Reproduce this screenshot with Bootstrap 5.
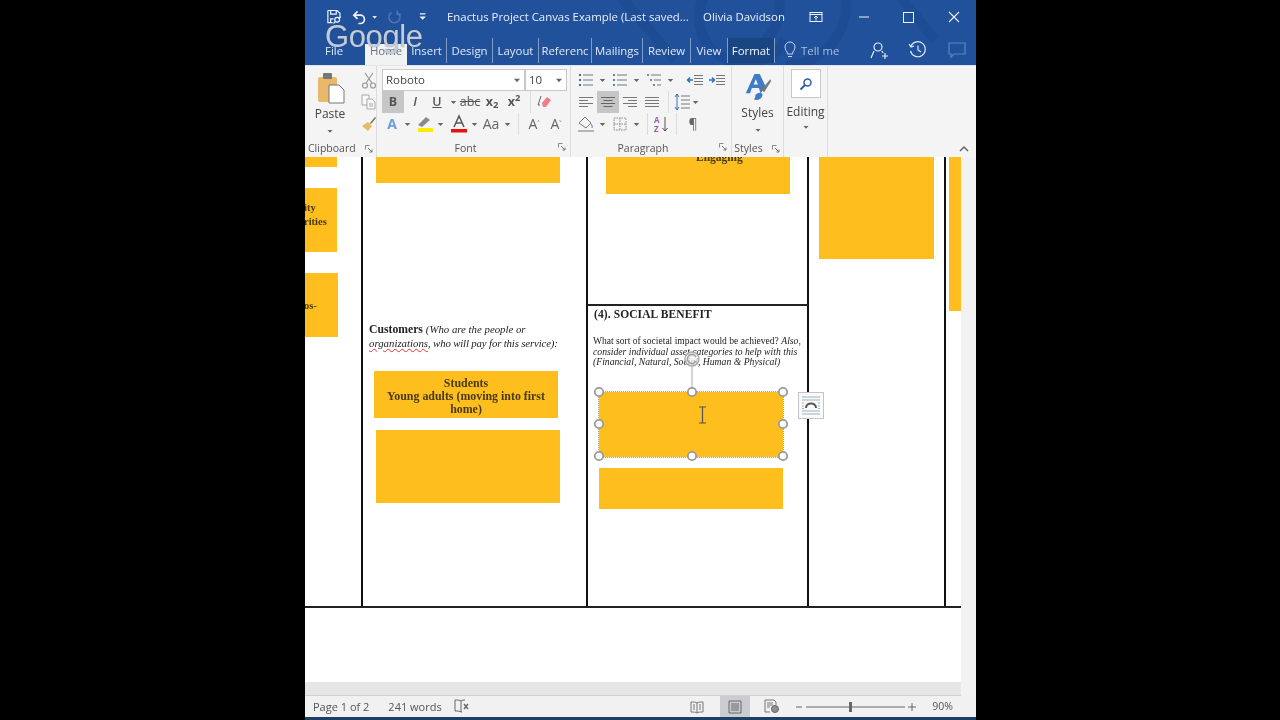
<!DOCTYPE html>
<html lang="en"><head><meta charset="utf-8"><title>Word</title>
<link href="https://cdn.jsdelivr.net/npm/bootstrap@5.3.0/dist/css/bootstrap.min.css" rel="stylesheet">
<style>
html,body{height:100%;margin:0;background:#000;overflow:hidden}
body{font-family:"Open Sans","Noto Sans",sans-serif;font-size:12px;color:#444}
.wnd{width:671px;height:720px;margin-left:305px;background:#fff;position:relative;overflow:hidden;filter:blur(.3px)}
.tbar{height:65px;background:#21519b;color:#e8eef8;position:relative;overflow:hidden}
.tpat{position:absolute;left:0;top:0}
.trow1{height:33px;padding-left:21px;position:relative}
.trow2{height:32px;padding-left:5px;position:relative}
.ttl{font-size:11.4px;margin-left:20px;width:256px;white-space:nowrap;flex:none}
.usr{width:100px;white-space:nowrap;font-size:11.4px;flex:none}
.cap{width:26px;flex:none}.cap2{width:45px;flex:none}.capg{margin-left:12px}
.tb{height:25px;padding:0;border-right:1px solid #7f9cc9;margin-top:5px;white-space:nowrap;overflow:hidden;line-height:25px;font-size:11.4px;color:#dfe8f5;text-align:center;flex:none}
.tb0{width:55px;border:0;padding-left:15px;text-align:left}
.tbh{width:42px;height:21px;margin-top:11px;line-height:13px;background:#f0f2f4;color:#6a7480;border:0}
.tb1{width:40px}.tb2{width:46px}.tb3{width:46px}.tb4{width:53px}.tb5{width:51px}.tb6{width:48px}.tb7{width:36px}
.tbf{width:48px;background:#1a4583;color:#f2f5fa;border-left:1px solid #7f9cc9}
.tlm{width:72px;border:0;color:#a9bedd;text-align:left;padding-left:4px}
.tic{margin-left:19px;margin-top:8px}
.gwm{position:absolute;left:20px;top:18px;font-size:31px;line-height:38px;color:rgba(255,255,255,.72);text-shadow:0 0 1px #28466f;letter-spacing:-.4px;font-family:"Liberation Sans",sans-serif}
.rib{height:92px;background:#f4f4f4;position:relative;border-top:1px solid #e0e6f0}
.grp{height:91px;border-right:1px solid #dcdcdc;position:relative;padding-top:3px}
.g1{width:72px;padding-left:5px}.g2{width:194px;padding-left:5px}.g3{width:161px;padding-left:4px}.g4{width:52px;padding-top:6px}.g5{width:44px}
.lbl{position:absolute;left:0;right:0;bottom:1px;height:16px;line-height:16px;text-align:center;font-size:10.5px;color:#555;white-space:nowrap}
.lblc{padding-right:16px}
.lbll{text-align:left;padding-left:3px}
.lnch{position:absolute;right:3px;bottom:4px}
.frow{height:22px}
.bx{width:22px;height:22px;flex:none}
.bxn{width:20px}.cr{width:11px;height:22px;flex:none}.gp{width:3px;flex:none}.gp1{width:1px;flex:none}.m2{margin-left:2px}
.vs{width:1px;height:22px;background:#dcdcdc;flex:none;margin:0 5px}
.vsn{margin-right:3px}
.on{background:#c6c6c6}
.fbox{height:22px;background:#fff;border:1px solid #c8c8c8;font-size:11.5px;line-height:20px;padding-left:3px;color:#444;position:relative}
.fn{width:143px}.fs{width:42px}
.big{font-size:12px;line-height:14px;color:#444;text-align:center}
.edb{width:30px;height:29px;background:#fff;border:1px solid #c8c8c8}
.chev{position:absolute;right:6px;bottom:4px}
.dmain{height:539px}
.pgw{width:656px;height:539px}
.pg{height:525px;position:relative;overflow:hidden;background:#fff}
.strip{height:14px;background:#e6e6e6;border-bottom:1px solid #d0d0d0}
.scr{width:15px;background:#f2f2f2}
.shp{position:absolute;background:#fdbe1e}
.vl{position:absolute;top:0;width:2px;height:450px;background:#111}
.hl{position:absolute;height:2px;background:#222}
.dt{position:absolute;font-family:"Liberation Serif",serif;color:#222;white-space:nowrap}
.s1{left:0;top:0;width:32px;height:10px}
.s2{left:0;top:31px;width:32px;height:64px}
.s3{left:0;top:116px;width:33px;height:64px}
.s4{left:71px;top:0;width:184px;height:26px}
.s5{left:301px;top:0;width:184px;height:37px;overflow:hidden}
.s6{left:514px;top:0;width:115px;height:102px}
.s7{left:644px;top:0;width:12px;height:154px}
.s8{left:69px;top:214px;width:184px;height:47px;text-align:center;font:bold 11.9px/13.2px "Liberation Serif",serif;color:#4a3a12;padding-top:6px}
.s9{left:71px;top:273px;width:184px;height:73px}
.s10{left:294px;top:235px;width:184px;height:65px;outline:1px dotted #b5a26a}
.s11{left:294px;top:311px;width:184px;height:41px}
.cutt{font:bold 10.5px/14px "Liberation Serif",serif;color:#4a3a12;position:absolute;left:-1px;white-space:nowrap}
.cust{left:64px;top:166px;font-size:11.7px;line-height:13.5px}
.cust i{font-size:10.8px;color:#222}
.tght{letter-spacing:-.15px}
.wavy{text-decoration:underline wavy #d33 1px}
.soc{left:289px;top:149px;font-weight:bold;font-size:11.5px;letter-spacing:.1px}
.socp{left:288px;top:179px;font-size:9.55px;line-height:10.7px}
.socp i{font-size:9.7px}
.hand{position:absolute;left:0;top:0}
.lay{position:absolute;left:493px;top:235px;width:26px;height:27px;background:#fafafa;border:1px solid #c4c4c4}
.sts{height:21px;background:#f1f1f1;font-size:11px;color:#555;line-height:21px;padding:0 23px 0 8px}
.wc{margin-left:19px;width:66px}
.rv{width:30px;height:21px;flex:none}
.rvon{background:#c9cdd1;margin-left:8px}
.rvw{margin-left:7px}
.zm{font-size:10.5px;width:33px;text-align:right;flex:none}
.sld{width:130px;height:21px;margin-left:3px;flex:none}
.end{height:3px;background:#1d3f66}
.vl1{left:56px}.vl2{left:281px}.vl3{left:502px}.vl4{left:639px}
.hl1{left:0;top:449px;width:656px}.hl2{left:282px;top:147px;width:221px}
.c1{top:13px}.c2{top:26px}.c3{left:90px;top:-7px;font-size:11.5px}
.fnt{font-size:12.5px;line-height:22px;color:#555}.fnt2{font-size:14px;line-height:22px;color:#666}
.afx{color:#6f9bd6;font-weight:700}
.tiny{font-size:8px;vertical-align:top}
.styt{margin-top:4px}.edt{margin-top:7px}
</style></head><body>
<svg width="0" height="0" class="position-absolute">
<defs>
<symbol id="c" viewBox="0 0 10 10"><path d="M2.5 4h5L5 6.8z" fill="#666"/></symbol>
<symbol id="cw" viewBox="0 0 10 10"><path d="M2.5 4h5L5 6.8z" fill="#dfe8f5"/></symbol>
<symbol id="ls" viewBox="0 0 10 10"><path d="M1.5 1.5h4M1.5 1.5v4" stroke="#888" fill="none"/><path d="M4 4l4 4M8 5.5V8H5.5" stroke="#777" fill="none"/></symbol>
<symbol id="al" viewBox="0 0 16 12"><path d="M1 1.5h14M1 4.5h9M1 7.5h14M1 10.5h9" stroke="#777" fill="none"/></symbol>
<symbol id="ac" viewBox="0 0 16 12"><path d="M1 1.5h14M3.5 4.5h9M1 7.5h14M3.5 10.5h9" stroke="#666" fill="none"/></symbol>
<symbol id="ar" viewBox="0 0 16 12"><path d="M1 1.5h14M6 4.5h9M1 7.5h14M6 10.5h9" stroke="#777" fill="none"/></symbol>
<symbol id="aj" viewBox="0 0 16 12"><path d="M1 1.5h14M1 4.5h14M1 7.5h14M1 10.5h14" stroke="#777" fill="none"/></symbol>
</defs></svg>
<div class="wnd">
 <header class="tbar">
  <svg class="tpat" width="671" height="65" viewBox="0 0 671 65" fill="none" stroke="#173f80" stroke-opacity=".25" stroke-width="10"><path d="M310 -10l60 70M400 -5a45 45 0 0 0 80 45M470 -10a40 40 0 0 1 -10 50M540 -5a60 60 0 0 1 -60 70M590 -10l40 50"/></svg>
  <div class="trow1 d-flex align-items-center">
   <svg width="18" height="18" viewBox="0 0 18 18" fill="none" stroke="#eef3fb" stroke-width="1.3"><path d="M2 2h10l3 3v4M2 2v13h5"/><path d="M5 2v4h6V2M5 15v-4h3"/><circle cx="12" cy="12" r="2.6"/><path d="M8 16l2-2M14 10l2-1"/></svg>
   <svg class="ms-2" width="18" height="18" viewBox="0 0 18 18" fill="none" stroke="#eef3fb" stroke-width="1.8"><path d="M7 3L3 7l4 4M3 7h7a4.500 4.500 0 0 1 0 9H8"/></svg>
   <svg class="m2" width="10" height="10"><use href="#cw"/></svg>
   <svg class="ms-2" width="16" height="16" viewBox="0 0 16 16" fill="none" stroke="#4d76b4" stroke-width="1.6"><path d="M11 3a6 6 0 1 1-6 0M11 1v4H15"/></svg>
   <svg class="ms-3" width="10" height="12" viewBox="0 0 10 12" fill="#eef3fb"><path d="M2 2h6v1.200H2zM1.500 5.500h7L5 9z"/></svg>
   <div class="ttl">Enactus Project Canvas Example (Last saved...</div>
   <div class="usr">Olivia Davidson</div>
   <div class="cap text-center"><svg width="14" height="12" viewBox="0 0 14 12" fill="none" stroke="#eef3fb"><rect x="1" y="1.500" width="12" height="9"/><path d="M1 3.500h12M7 9.500V5M5 7l2-2 2 2"/></svg></div>
   <div class="cap2 capg text-center"><svg width="12" height="12" viewBox="0 0 12 12"><path d="M1 6h10" stroke="#eef3fb"/></svg></div>
   <div class="cap2 text-center"><svg width="11" height="11" viewBox="0 0 11 11" fill="none" stroke="#eef3fb"><rect x=".5" y=".5" width="10" height="10"/></svg></div>
   <div class="cap2 text-center"><svg width="12" height="12" viewBox="0 0 12 12" stroke="#eef3fb" stroke-width="1.100"><path d="M1 1l10 10M11 1L1 11"/></svg></div>
  </div>
  <nav class="trow2 d-flex">
   <div class="tb tb0">File</div><div class="tb tbh">Home</div><div class="tb tb1">Insert</div>
   <div class="tb tb2">Design</div><div class="tb tb3">Layout</div><div class="tb tb4">Referenc</div><div class="tb tb5">Mailings</div><div class="tb tb6">Review</div><div class="tb tb7 border-0">View</div><div class="tb tbf">Format</div>
   <svg class="ms-2 mt-2" width="14" height="18" viewBox="0 0 14 18" fill="none" stroke="#c9d7ec"><path d="M4.500 13c0-3-2.500-3.500-2.500-7a5 5 0 0 1 10 0c0 3.500-2.500 4-2.500 7zM5 15.500h4"/></svg>
   <div class="tb tlm">Tell me</div>
   <svg class="mt-2" width="20" height="18" viewBox="0 0 20 18" fill="none" stroke="#e6edf8" stroke-width="1.200"><circle cx="9" cy="6" r="4"/><path d="M2 17l3-7M13 10l1 2M13 15h6M16 12v6"/></svg>
   <svg class="tic" width="20" height="18" viewBox="0 0 20 18" fill="none" stroke="#dfe8f5" stroke-width="1.200"><path d="M3 5a7.500 7.500 0 1 1-.5 5M1 3l2 3 3-1M10 4.500V9l3 2"/></svg>
   <svg class="tic" width="20" height="18" viewBox="0 0 20 18" fill="none" stroke="#5c86bf" stroke-width="1.200"><path d="M2 2h16v11H7l-3 3v-3H2z"/></svg>
  </nav>
  <div class="gwm">Google</div>
 </header>
 <section class="rib d-flex">
  <div class="grp g1 d-flex">
   <div class="big">
    <svg class="d-block mx-auto" width="40" height="38" viewBox="0 0 40 38"><rect x="8" y="8" width="19" height="25" rx="2" fill="#e8b96a"/><rect x="13" y="4" width="9" height="6" rx="1" fill="#777"/><path d="M19 16h10l5 5v13H19z" fill="#fff" stroke="#777"/></svg>
    <div>Paste</div><svg width="10" height="10" class="mt-1"><use href="#c"/></svg>
   </div>
   <div class="ms-2">
    <div class="bx d-flex align-items-center justify-content-center"><svg width="16" height="17" viewBox="0 0 16 17" fill="none" stroke="#999" stroke-width="1.200"><circle cx="4" cy="13.500" r="2.500"/><circle cx="12" cy="13.500" r="2.500"/><path d="M5 11L12 1M11 11L4 1"/></svg></div>
    <div class="bx d-flex align-items-center justify-content-center"><svg width="16" height="16" viewBox="0 0 16 16" fill="#f7f7f7" stroke="#aaa"><path d="M1 1h7v10H1z"/><path d="M6 5h5l3 3v7H6z"/><path d="M8 10h4M8 12h4"/></svg></div>
    <div class="bx d-flex align-items-center justify-content-center"><svg width="16" height="16" viewBox="0 0 16 16"><path d="M9 7l5-6 1 1-5 6z" fill="#7a6a50"/><path d="M1 10l6-4 4 4-4 5z" fill="#e8b96a"/></svg></div>
   </div>
   <div class="lbl lbll">Clipboard<svg class="ms-2" width="10" height="10"><use href="#ls"/></svg></div>
  </div>
  <div class="grp g2">
   <div class="d-flex"><div class="fbox fn">Roboto<svg class="position-absolute top-0 end-0 mt-1" width="14" height="12"><use href="#c"/></svg></div><div class="fbox fs">10<svg class="position-absolute top-0 end-0 mt-1" width="14" height="12"><use href="#c"/></svg></div></div>
   <div class="frow d-flex align-items-center">
    <div class="bx on d-flex align-items-center justify-content-center"><b class="fnt">B</b></div>
    <div class="bx text-center"><i class="fw-semibold fnt">I</i></div>
    <div class="bx text-center"><u class="fw-semibold fnt">U</u></div>
    <svg class="cr" viewBox="0 0 11 22"><use href="#c" width="11" height="22"/></svg>
    <div class="bx text-center"><s class="fnt">abc</s></div>
    <div class="bx text-center fw-bold fnt">x<sub>2</sub></div>
    <div class="bx text-center fw-bold fnt">x<sup>2</sup></div>
    <div class="vs vsn"></div>
    <svg width="18" height="18" viewBox="0 0 18 18"><path d="M7 3L4 12h2" fill="none" stroke="#666"/><path d="M8 10l5-6 4 3-5 7H9z" fill="#ef7d8c"/></svg>
   </div>
   <div class="frow d-flex align-items-center">
    <div class="bx bxn text-center fnt2 afx">A</div>
    <svg class="cr" viewBox="0 0 11 22"><use href="#c" width="11" height="22"/></svg>
    <svg class="m2" width="20" height="18" viewBox="0 0 20 18"><path d="M3 10l8-8 4 3-8 7z" fill="#8a8a8a"/><rect x="3" y="13" width="15" height="4" fill="#ffeb00"/></svg>
    <svg class="cr" viewBox="0 0 11 22"><use href="#c" width="11" height="22"/></svg>
    <div class="gp"></div>
    <svg width="20" height="20" viewBox="0 0 20 20"><path d="M5 13L10 2l5 11M7 9h6" fill="none" stroke="#555" stroke-width="1.500"/><rect x="2" y="15" width="16" height="3.500" fill="#e81010"/></svg>
    <svg class="cr" viewBox="0 0 11 22"><use href="#c" width="11" height="22"/></svg>
    <div class="bx text-center fnt2">Aa</div>
    <svg class="cr" viewBox="0 0 11 22"><use href="#c" width="11" height="22"/></svg>
    <div class="vs"></div>
    <div class="bx bxn text-center fnt2">A<small class="tiny">˄</small></div><div class="bx bxn text-center fnt2 m2">A<small class="tiny">˅</small></div>
   </div>
   <div class="lbl lblc">Font<svg class="lnch" width="10" height="10"><use href="#ls"/></svg></div>
  </div>
  <div class="grp g3">
   <div class="frow d-flex align-items-center">
    <div class="bx d-flex align-items-center justify-content-center"><svg width="16" height="14" viewBox="0 0 16 14"><path d="M5 2h10M5 7h10M5 12h10" stroke="#777"/><path d="M1 1h2v2H1zM1 6h2v2H1zM1 11h2v2H1z" fill="#3d6fb5"/></svg></div>
    <svg class="cr" viewBox="0 0 11 22"><use href="#c" width="11" height="22"/></svg>
    <div class="gp1"></div>
    <div class="bx d-flex align-items-center justify-content-center"><svg width="16" height="14" viewBox="0 0 16 14"><path d="M5 2h10M5 7h10M5 12h10" stroke="#777"/><path d="M1 1h2v2H1zM1 6h2v2H1zM1 11h2v2H1z" fill="#5a83c0"/></svg></div>
    <svg class="cr" viewBox="0 0 11 22"><use href="#c" width="11" height="22"/></svg>
    <div class="gp1"></div>
    <div class="bx d-flex align-items-center justify-content-center"><svg width="16" height="14" viewBox="0 0 16 14"><path d="M5 2h10M8 7h7M11 12h4" stroke="#777"/><path d="M1 1h2v2H1zM4 6h2v2H4zM7 11h2v2H7z" fill="#6a8ac0"/></svg></div>
    <svg class="cr" viewBox="0 0 11 22"><use href="#c" width="11" height="22"/></svg>
    <div class="bx ms-2 d-flex align-items-center justify-content-center"><svg width="18" height="13" viewBox="0 0 18 13"><path d="M8 1.500h9M8 4.500h9M8 7.500h9M8 10.500h9" stroke="#777"/><path d="M7 6H2M4 3.500L1.500 6 4 8.500" stroke="#2e6fc2" stroke-width="1.500" fill="none"/></svg></div>
    <div class="bx d-flex align-items-center justify-content-center"><svg width="18" height="13" viewBox="0 0 18 13"><path d="M8 1.500h9M8 4.500h9M8 7.500h9M8 10.500h9" stroke="#777"/><path d="M1 6h5M4 3.500L6.500 6 4 8.500" stroke="#2e6fc2" stroke-width="1.500" fill="none"/></svg></div>
   </div>
   <div class="frow d-flex align-items-center">
    <div class="bx d-flex align-items-center justify-content-center"><svg width="16" height="12"><use href="#al"/></svg></div>
    <div class="bx on d-flex align-items-center justify-content-center"><svg width="16" height="12"><use href="#ac"/></svg></div>
    <div class="bx d-flex align-items-center justify-content-center"><svg width="16" height="12"><use href="#ar"/></svg></div>
    <div class="bx d-flex align-items-center justify-content-center"><svg width="16" height="12"><use href="#aj"/></svg></div>
    <div class="vs"></div>
    <svg width="16" height="18" viewBox="0 0 16 18"><path d="M7 3h9M7 7h9M7 11h9M7 15h9" stroke="#777"/><path d="M3 1v16M1 4l2-3 2 3M1 14l2 3 2-3" stroke="#3d6fb5" fill="none"/></svg>
    <svg class="cr" viewBox="0 0 11 22"><use href="#c" width="11" height="22"/></svg>
   </div>
   <div class="frow d-flex align-items-center">
    <div class="bx d-flex align-items-center justify-content-center"><svg width="18" height="18" viewBox="0 0 18 18" fill="none" stroke="#777"><path d="M2 8l6-6 6 6-5 5z"/><path d="M1 16h16"/><path d="M13 8c3 2 2 5 2 5" stroke="#3d6fb5"/></svg></div>
    <svg class="cr" viewBox="0 0 11 22"><use href="#c" width="11" height="22"/></svg>
    <div class="gp1"></div>
    <div class="bx d-flex align-items-center justify-content-center"><svg width="14" height="14" viewBox="0 0 14 14" fill="none" stroke="#888" stroke-dasharray="1.500 1"><path d="M1 1h12v12H1zM7 1v12M1 7h12"/></svg></div>
    <svg class="cr" viewBox="0 0 11 22"><use href="#c" width="11" height="22"/></svg>
    <div class="vs"></div>
    <svg width="18" height="18" viewBox="0 0 18 18"><text x="1" y="8" font-size="8" fill="#9a5db0" font-weight="700">A</text><text x="1" y="17" font-size="8" fill="#9a5db0" font-weight="700">Z</text><path d="M12 2v14M9.500 13l2.500 3 2.500-3" stroke="#555" fill="none"/></svg>
    <div class="vs"></div>
    <div class="bx text-center fnt2">¶</div>
   </div>
   <div class="lbl lblc">Paragraph<svg class="lnch" width="10" height="10"><use href="#ls"/></svg></div>
  </div>
  <div class="grp g4 big">
   <svg class="d-block mx-auto" width="28" height="30" viewBox="0 0 32 34"><path d="M2 24L12 2h6l7 15-6 7-2-6H9l-2 6z" fill="#3f7cc4"/><path d="M11 14h5l-2.500-6z" fill="#f4f4f4"/><path d="M20 20l10-12 1 2-8 13z" fill="#777"/><path d="M13 26c4-4 9-3 8 1s-6 6-10 4c2-1 2-3 2-5z" fill="#3f7cc4"/></svg>
   <div class="styt">Styles</div><svg width="10" height="10" class="mt-1"><use href="#c"/></svg>
   <div class="lbl">Styles<svg class="ms-2" width="10" height="10"><use href="#ls"/></svg></div>
  </div>
  <div class="grp g5 big">
   <div class="edb mx-auto d-flex align-items-center justify-content-center"><svg width="14" height="14" viewBox="0 0 14 14" fill="none" stroke="#2f5f9e" stroke-width="1.500"><circle cx="8.500" cy="5.500" r="3.500"/><path d="M6 8l-4.500 4.500" stroke-width="2"/></svg></div>
   <div class="edt">Editing</div><svg width="10" height="10"><use href="#c"/></svg>
  </div>
  <svg class="chev" width="12" height="8" viewBox="0 0 12 8" fill="none" stroke="#666" stroke-width="1.500"><path d="M2 6l4-4 4 4"/></svg>
 </section>
 <main class="dmain d-flex">
  <div class="pgw">
   <div class="pg">
    <div class="vl vl1"></div><div class="vl vl2"></div><div class="vl vl3"></div><div class="vl vl4"></div>
    <div class="hl hl1"></div><div class="hl hl2"></div>
    <div class="shp s1"></div>
    <div class="shp s2"><span class="cutt c1">ity<br>rities</span></div>
    <div class="shp s3"><span class="cutt c2">os-</span></div>
    <div class="shp s4"></div>
    <div class="shp s5"><span class="cutt c3">Engaging</span></div>
    <div class="shp s6"></div><div class="shp s7"></div>
    <div class="dt cust"><b>Customers</b> <i>(Who are the people or<br><span class="wavy">organizations</span><span class="tght">, who will pay for this service):</span></i></div>
    <div class="shp s8">Students<br>Young adults (moving into first<br>home)</div>
    <div class="shp s9"></div>
    <div class="dt soc">(4). SOCIAL BENEFIT</div>
    <div class="dt socp">What sort of societal impact would be achieved? <i>Also,</i><br><i>consider individual asset categories to help with this</i><br><i>(Financial, Natural, Social, Human &amp; Physical)</i></div>
    <div class="shp s10"></div><div class="shp s11"></div>
    <svg class="hand" width="656" height="525" viewBox="305 157 656 525">
     <path d="M692 367v25" stroke="#aaa"/>
     <g fill="#fff" stroke="#999" stroke-width="1.800"><circle cx="599" cy="392" r="4.200"/><circle cx="692" cy="392" r="4.200"/><circle cx="783" cy="392" r="4.200"/><circle cx="599" cy="424" r="4.200"/><circle cx="783" cy="424" r="4.200"/><circle cx="599" cy="456" r="4.200"/><circle cx="692" cy="456" r="4.200"/><circle cx="783" cy="456" r="4.200"/></g>
     <circle cx="692" cy="359" r="7" fill="#eee" fill-opacity=".75" stroke="#aaa" stroke-width="1.500"/><path d="M696 361a4.500 4.500 0 1 1 0-4" fill="none" stroke="#999" stroke-width="1.300"/>
     <path d="M699 407h7M699 423h7M702.500 407v16" stroke="#555" stroke-width="1.200" fill="none"/>
    </svg>
    <div class="lay"><svg class="d-block" width="24" height="25" viewBox="0 0 24 25" fill="none" stroke="#9fb0c4"><path d="M3 4h18M3 7h18M3 18h18M3 21h18M3 10h2M19 10h2M3 13h2M19 13h2M3 15.500h2M19 15.500h2"/><path d="M7 15c0-6 10-6 10 0" stroke="#555" stroke-width="2"/></svg></div>
   </div>
   <div class="strip"></div>
  </div>
  <div class="scr"></div>
 </main>
 <footer class="sts d-flex align-items-center">
  <span>Page 1 of 2</span><span class="wc">241 words</span>
  <svg width="16" height="15" viewBox="0 0 16 15" fill="none" stroke="#666"><path d="M1 1c2 0 5 0 6 1v11c-1-1-4-1-6-1zM7 2c1-1 3-1 4-1M7 13h1"/><path d="M10 5l4 5M14 5l-4 5" stroke-width="1.400"/></svg>
  <div class="rv ms-auto d-flex align-items-center justify-content-center"><svg width="14" height="14" viewBox="0 0 14 14" fill="none" stroke="#777"><path d="M1 2c2 0 5 0 6 1 1-1 4-1 6-1v10c-2 0-5 0-6 1-1-1-4-1-6-1zM7 3v10M3 5h2M3 7h2M3 9h2M9 5h2M9 7h2M9 9h2"/></svg></div>
  <div class="rv rvon d-flex align-items-center justify-content-center"><svg width="14" height="14" viewBox="0 0 14 14" fill="none" stroke="#666"><path d="M1 1h12v12H1zM3 4h8M3 6h8M3 8h8M3 10h8"/></svg></div>
  <div class="rv rvw d-flex align-items-center justify-content-center"><svg width="16" height="15" viewBox="0 0 16 15" fill="none" stroke="#777"><path d="M1 1h9l2 2v3M1 1v12h5M3 4h6M3 6h6M3 8h3"/><circle cx="11" cy="10" r="3.500" fill="#8a9299" stroke="#666"/></svg></div>
  <svg class="sld" viewBox="790 0 130 21"><path d="M796 11h6M806 11h99M908 11h8M912 7v8" stroke="#666" fill="none"/><rect x="849" y="6" width="3" height="10" fill="#666"/></svg>
  <span class="zm">90%</span>
 </footer>
 <div class="end"></div>
</div>
</body></html>
